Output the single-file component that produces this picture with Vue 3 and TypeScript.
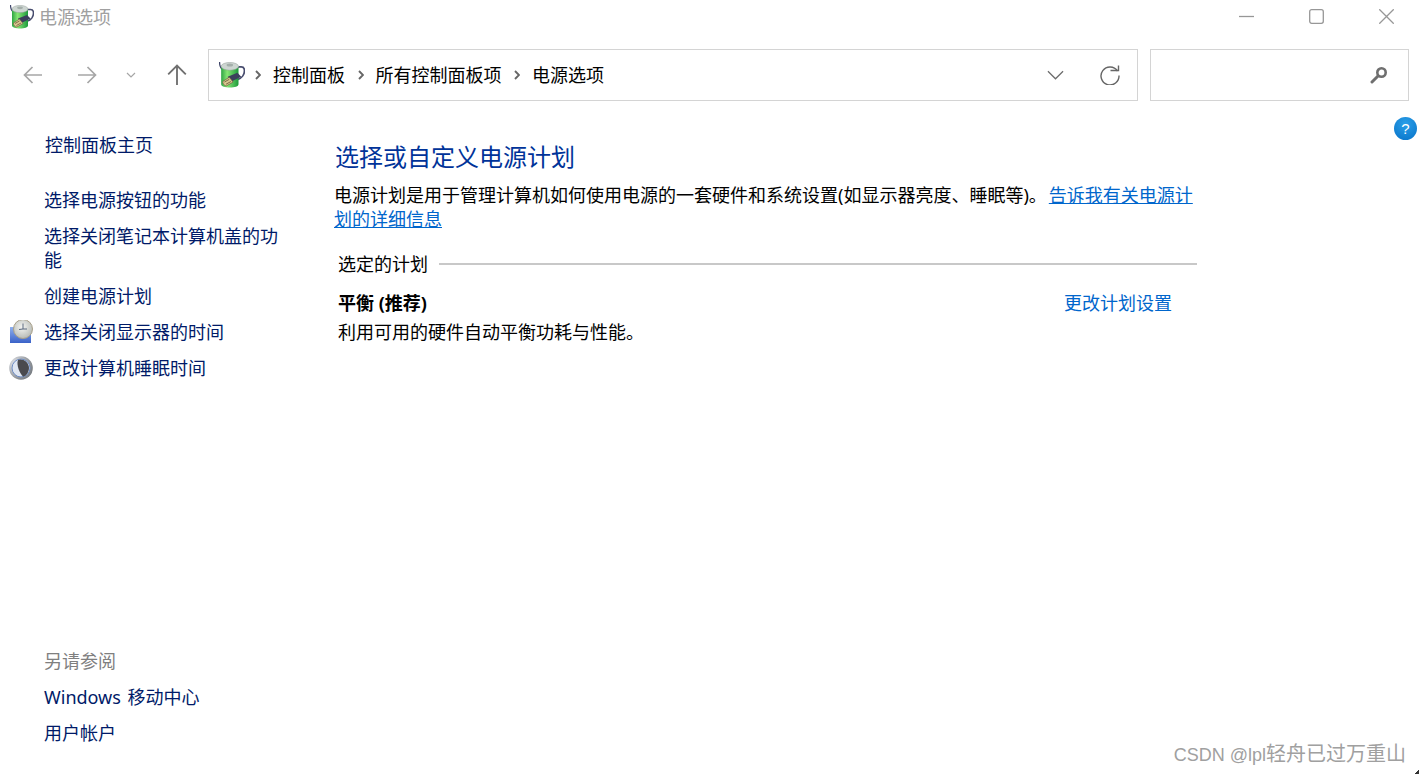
<script setup lang="ts">
const crumbs = ['控制面板', '所有控制面板项', '电源选项']
</script>

<template>
  <div class="window">
    <header class="titlebar">
      <svg class="title-icon" viewBox="0 0 24 24">
        <defs>
          <linearGradient id="cell" x1="0" x2="1" y1="0" y2="0">
            <stop offset="0" stop-color="#2ea544" />
            <stop offset="0.35" stop-color="#86e574" />
            <stop offset="1" stop-color="#1c9a3b" />
          </linearGradient>
          <symbol id="power" viewBox="0 0 24 24">
            <path d="M.5 0c0 3.500 1 6 3.500 7.500" fill="none" stroke="#3d4468" stroke-width="1.200" />
            <path d="M16 4.500h4.500c2.500 0 3 1.500 3 3.500 0 4-3 7-6 8" fill="none" stroke="#474c6e" stroke-width="1.600" />
            <path d="M2 4h16v16.500c0 2-3.500 3-8 3s-8-1-8-3z" fill="url(#cell)" />
            <ellipse cx="10" cy="4" rx="8" ry="3.600" fill="#cdd5d1" stroke="#97a19d" stroke-width=".5" />
            <ellipse cx="10" cy="2.800" rx="3" ry="1.400" fill="#a4aeaa" />
            <path d="M8 13.500l9-3.500 3.500 3.500-10 5z" fill="#3b405c" />
            <path d="M3.500 18l6-4 3.500 4.500-6 3.500c-1.800.5-4-2.500-3.500-4z" fill="#d9c68e" stroke="#6b5a3a" stroke-width=".6" />
            <path d="M5 18.500l4.500-2.500M6.500 20.500l4.500-2.500" stroke="#6b5a3a" stroke-width=".8" />
          </symbol>
        </defs>
        <use href="#power" />
      </svg>
      <span class="title-text">电源选项</span>
      <div class="win-controls">
        <svg viewBox="0 0 15 15"><path d="M0 7.500h15" /></svg>
        <svg viewBox="0 0 15 15"><rect x=".7" y=".7" width="13.600" height="13.600" rx="2" /></svg>
        <svg viewBox="0 0 15 15"><path d="M.3.300l14.400 14.400M14.700.300L.3 14.700" /></svg>
      </div>
    </header>

    <nav class="navbar">
      <div class="nav-buttons">
        <svg class="arrow" viewBox="0 0 20 20"><path d="M19 10H1.500M9.500 2l-8 8 8 8" /></svg>
        <svg class="arrow" viewBox="0 0 20 20"><path d="M1 10h17.500M10.500 2l8 8-8 8" /></svg>
        <svg class="caret" viewBox="0 0 10 6"><path d="M1 1l4 4 4-4" /></svg>
        <svg class="arrow up" viewBox="0 0 20 20"><path d="M10 19V1.500M2 9.500l8-8 8 8" /></svg>
      </div>
      <div class="address">
        <svg class="addr-icon" viewBox="0 0 24 24"><use href="#power" /></svg>
        <template v-for="c in crumbs" :key="c">
          <svg class="sep" viewBox="0 0 6 10"><path d="M1 1l4 4-4 4" /></svg>
          <span class="crumb">{{ c }}</span>
        </template>
        <span class="spacer"></span>
        <svg class="drop" viewBox="0 0 18 10"><path d="M1 1l8 8 8-8" /></svg>
        <svg class="refresh" viewBox="0 0 20 20">
          <path d="M17.500 6A9 9 0 1 0 19 10.500" />
          <path d="M10.500 5.500h8V.5" />
        </svg>
      </div>
      <div class="search">
        <svg viewBox="0 0 18 18">
          <circle cx="11.500" cy="6.500" r="4.200" fill="none" stroke="#6f6f6f" stroke-width="2.600" />
          <path d="M8 10l-6 6" stroke="#6f6f6f" stroke-width="3" stroke-linecap="round" />
        </svg>
      </div>
    </nav>

    <div class="content">
      <aside class="sidebar">
        <a class="side-link home">控制面板主页</a>
        <ul class="tasks">
          <li>选择电源按钮的功能</li>
          <li>选择关闭笔记本计算机盖的功能</li>
          <li>创建电源计划</li>
          <li>
            <svg class="side-icon" viewBox="0 0 24 24">
              <defs>
                <linearGradient id="screen" x1="0" x2="0" y1="0" y2="1">
                  <stop offset="0" stop-color="#8fb0ee" />
                  <stop offset="1" stop-color="#3a62c8" />
                </linearGradient>
                <radialGradient id="face" cx="0.45" cy="0.4" r="0.7">
                  <stop offset="0" stop-color="#f4f5f2" />
                  <stop offset="1" stop-color="#aeb2ad" />
                </radialGradient>
              </defs>
              <rect x="1" y="7" width="21" height="16" fill="url(#screen)" />
              <circle cx="14" cy="9" r="9.500" fill="url(#face)" stroke="#a89f88" />
              <path d="M14 3.500V9l-4 .5M14 9h4" fill="none" stroke="#5c6a80" stroke-width="1" />
            </svg>
            选择关闭显示器的时间
          </li>
          <li>
            <svg class="side-icon" viewBox="0 0 24 24">
              <defs>
                <radialGradient id="moon" cx="0.3" cy="0.35" r="0.8">
                  <stop offset="0" stop-color="#eef0f4" />
                  <stop offset="1" stop-color="#6d7278" />
                </radialGradient>
              </defs>
              <circle cx="12" cy="12" r="11.800" fill="url(#moon)" />
              <circle cx="12" cy="12" r="9" fill="#dfe6f2" stroke="#6d8cc4" stroke-width="1" />
              <path d="M9 4c4-2 11 1.500 11 8 0 5-4 9-6 8.500C11 18 7 9 9 4z" fill="#4a4a4e" />
            </svg>
            更改计算机睡眠时间
          </li>
        </ul>
        <div class="see-also">
          <div class="also-title">另请参阅</div>
          <a class="side-link wide">Windows 移动中心</a>
          <a class="side-link">用户帐户</a>
        </div>
      </aside>

      <main class="main">
        <h1>选择或自定义电源计划</h1>
        <p class="intro">
          电源计划是用于管理计算机如何使用电源的一套硬件和系统设置(如显示器亮度、睡眠等)。<a class="blue under link">告诉我有关电源计划的详细信息</a>
        </p>
        <section class="plans">
          <div class="plans-head">
            <span>选定的计划</span>
            <i></i>
          </div>
          <div class="plan-row">
            <b>平衡 (推荐)</b>
            <a class="blue">更改计划设置</a>
          </div>
          <div class="plan-desc">利用可用的硬件自动平衡功耗与性能。</div>
        </section>
      </main>

      <div class="help">?</div>
    </div>

    <div class="watermark"><span>CSDN @lpl</span>轻舟已过万重山</div>
    <div class="corner"></div>
  </div>
</template>

<style scoped>
.window {
  position: relative;
  height: 774px;
  overflow: hidden;
  background: #fff;
  display: flex;
  flex-direction: column;
  font: 18px/24px "Noto Sans", "Noto Sans CJK SC", sans-serif;
  color: #000;
}

.titlebar {
  height: 33px;
  display: flex;
  align-items: center;
  padding-left: 10px;
  flex: none;
}
.title-icon {
  width: 24px;
  height: 24px;
  margin-right: 5px;
}
.title-text {
  color: #a0a0a0;
}
.win-controls {
  margin-left: auto;
  display: flex;
  gap: 55px;
  padding-right: 25px;
}
.win-controls svg {
  width: 15px;
  height: 15px;
  fill: none;
  stroke: #979797;
  stroke-width: 1.300;
}

.navbar {
  height: 52px;
  margin-top: 16px;
  display: flex;
  flex: none;
}
.nav-buttons {
  width: 208px;
  display: flex;
  align-items: center;
  padding-left: 23px;
  box-sizing: border-box;
}
.arrow {
  width: 20px;
  height: 20px;
  fill: none;
  stroke: #a6a6a6;
  stroke-width: 1.700;
  margin-right: 34px;
}
.arrow.up {
  stroke: #707070;
  margin-right: 0;
  margin-left: 30px;
  width: 22px;
  height: 22px;
}
.caret {
  width: 10px;
  height: 6px;
  fill: none;
  stroke: #a6a6a6;
  stroke-width: 1.200;
  margin-left: -5px;
}

.address {
  width: 930px;
  box-sizing: border-box;
  border: 1px solid #d4d4d4;
  display: flex;
  align-items: center;
  padding: 0 17px 0 10px;
}
.addr-icon {
  width: 26px;
  height: 26px;
  margin-right: 10px;
}
.sep {
  width: 6px;
  height: 10px;
  fill: none;
  stroke: #666;
  stroke-width: 1.900;
}
.crumb {
  margin-left: 12px;
  margin-right: 12.5px;
}
.spacer {
  flex: 1;
}
.drop {
  width: 17px;
  height: 10px;
  fill: none;
  stroke: #6b6b6b;
  stroke-width: 1.300;
  margin-right: 36px;
}
.refresh {
  width: 20px;
  height: 20px;
  fill: none;
  stroke: #666;
  stroke-width: 1.400;
}

.search {
  width: 259px;
  margin-left: 12px;
  box-sizing: border-box;
  border: 1px solid #d4d4d4;
  display: flex;
  align-items: center;
  justify-content: flex-end;
  padding-right: 20px;
}
.search svg {
  width: 18px;
  height: 18px;
}

.content {
  position: relative;
  flex: 1;
  display: flex;
  min-height: 0;
}

.sidebar {
  width: 334px;
  flex: none;
  box-sizing: border-box;
  padding: 32px 40px 29px 44px;
  display: flex;
  flex-direction: column;
  color: #001a68;
}
.side-link {
  display: block;
  margin-bottom: 12px;
}
.home {
  margin-bottom: 31px;
  margin-left: 1px;
}
.wide {
  word-spacing: 2px;
}
.tasks {
  list-style: none;
  margin: 0;
  padding: 0;
}
.tasks li {
  position: relative;
  margin-bottom: 12px;
  width: 240px;
}
.side-icon {
  position: absolute;
  left: -35px;
  top: 0;
  width: 24px;
  height: 24px;
}
.see-also {
  margin-top: auto;
}
.see-also .side-link:last-child {
  margin-bottom: 0;
}
.also-title {
  color: #7f7f7f;
  margin-bottom: 12px;
}

.main {
  width: 863px;
  padding-top: 39px;
  flex: none;
}
h1 {
  margin: 0 0 0 1px;
  font-size: 24px;
  line-height: 34px;
  font-weight: 400;
  color: #003399;
}
.intro {
  margin: 9px 0 0;
}
.blue {
  color: #0066cc;
}
.under {
  text-decoration: underline;
}
.link {
  margin-left: 2px;
}
.plans {
  margin-top: 21px;
  padding-left: 4px;
}
.plans-head {
  display: flex;
  align-items: center;
  gap: 11px;
}
.plans-head i {
  flex: 1;
  height: 2px;
  background: #c8c8c8;
}
.plan-row {
  margin-top: 15px;
  display: flex;
  justify-content: space-between;
  padding-right: 25px;
}
.plan-desc {
  margin-top: 5px;
}

.help {
  position: absolute;
  right: 2px;
  top: 16px;
  width: 23px;
  height: 23px;
  border-radius: 50%;
  background: radial-gradient(circle at 50% 30%, #2b9fe8, #0672c8);
  color: #fff;
  font: 400 15px/23px "Liberation Sans", sans-serif;
  text-align: center;
}

.watermark {
  position: absolute;
  right: 13px;
  bottom: 5px;
  font: 20px/28px "Noto Sans CJK SC", sans-serif;
  color: #a0a0a0;
}
.watermark span {
  font: 18px/28px "Liberation Sans", sans-serif;
}
.corner {
  position: absolute;
  right: 0;
  bottom: 0;
  width: 4px;
  height: 4px;
  background: linear-gradient(135deg, transparent 50%, #333 50%);
}
</style>
